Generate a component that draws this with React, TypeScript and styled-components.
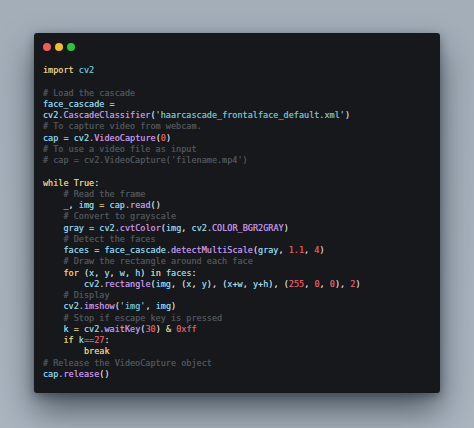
import React from "react";
import styled, { createGlobalStyle } from "styled-components";

const Global = createGlobalStyle`
  html, body { margin: 0; padding: 0; }
  body { width: 474px; height: 428px; overflow: hidden; }
`;

const Page = styled.div`
  width: 474px;
  height: 428px;
  box-sizing: border-box;
  padding: 33px 0 0 34px;
  background: linear-gradient(180deg, #a3aeb9 0%, #a7b2bd 60%, #aab5c0 100%);
`;

const Window = styled.div`
  width: 406px;
  height: 360px;
  box-sizing: border-box;
  padding: 10px 9px;
  background: #16181b;
  border-radius: 3px;
  box-shadow: 0 18px 34px rgba(22, 30, 38, 0.6), 0 3px 10px rgba(22, 30, 38, 0.4);
  display: flex;
  flex-direction: column;
`;

const Dots = styled.div`
  display: flex;
  gap: 4px;
`;

const Dot = styled.span<{ $c: string }>`
  width: 8px;
  height: 8px;
  border-radius: 50%;
  background: ${(p) => p.$c};
`;

const Code = styled.pre`
  margin: 14px 0 0 0;
  font-family: "DejaVu Sans Mono", "Liberation Mono", monospace;
  font-size: 8.5px;
  line-height: 11.25px;
  color: #c3c7cb;
  white-space: pre;
  text-shadow: 0 0 0.4px currentColor;
`;

const Line = styled.div`
  height: 11.25px;
`;

const colors: Record<string, string> = {
  kw: "#e2c880",
  id: "#88cbe3",
  mod: "#62bacf",
  fn: "#bf8fe0",
  str: "#70b8c9",
  num: "#d9575f",
  com: "#4d5258",
  op: "#d2c87e",
  eq: "#d9575f",
  dot: "#a0a6ac",
  p: "#c8ccd0",
  sp: "inherit",
};

const Tok = styled.span<{ $k: string }>`
  color: ${(p) => colors[p.$k]};
`;

const source = `import cv2

# Load the cascade
face_cascade =
cv2.CascadeClassifier('haarcascade_frontalface_default.xml')
# To capture video from webcam.
cap = cv2.VideoCapture(0)
# To use a video file as input
# cap = cv2.VideoCapture('filename.mp4')

while True:
    # Read the frame
    _, img = cap.read()
    # Convert to grayscale
    gray = cv2.cvtColor(img, cv2.COLOR_BGR2GRAY)
    # Detect the faces
    faces = face_cascade.detectMultiScale(gray, 1.1, 4)
    # Draw the rectangle around each face
    for (x, y, w, h) in faces:
        cv2.rectangle(img, (x, y), (x+w, y+h), (255, 0, 0), 2)
    # Display
    cv2.imshow('img', img)
    # Stop if escape key is pressed
    k = cv2.waitKey(30) & 0xff
    if k==27:
        break
# Release the VideoCapture object
cap.release()`;

const KW = new Set(["import", "while", "True", "for", "in", "if", "break"]);

function tokenize(line: string): { k: string; t: string }[] {
  const out: { k: string; t: string }[] = [];
  const re = /(#.*$)|('[^']*')|(0x[0-9a-f]+|\d+(?:\.\d+)?)|([A-Za-z_][A-Za-z0-9_]*)|(==)|(=|&)|(\.)|(\s+)|(.)/g;
  let m: RegExpExecArray | null;
  let prevDot = false;
  let afterImport = false;
  while ((m = re.exec(line))) {
    if (m[1]) out.push({ k: "com", t: m[1] });
    else if (m[2]) out.push({ k: "str", t: m[2] });
    else if (m[3]) out.push({ k: "num", t: m[3] });
    else if (m[4]) {
      const w = m[4];
      let k = "id";
      if (KW.has(w)) k = "kw";
      else if (afterImport) k = "mod";
      else if (prevDot) k = "fn";
      out.push({ k, t: w });
      afterImport = w === "import";
    } else if (m[5]) out.push({ k: "eq", t: m[5] });
    else if (m[6]) out.push({ k: "op", t: m[6] });
    else if (m[7]) out.push({ k: "dot", t: m[7] });
    else if (m[8]) out.push({ k: "sp", t: m[8] });
    else out.push({ k: "p", t: m[9] });
    if (!m[8]) prevDot = !!m[7];
  }
  return out;
}

export default function App() {
  const lines = source.split("\n");
  return (
    <>
      <Global />
      <Page>
        <Window>
          <Dots>
            <Dot $c="#ee5e57" />
            <Dot $c="#f4bd2e" />
            <Dot $c="#2ac43f" />
          </Dots>
          <Code>
            {lines.map((l, i) => (
              <Line key={i}>
                {tokenize(l).map((t, j) => (
                  <Tok key={j} $k={t.k}>
                    {t.t}
                  </Tok>
                ))}
              </Line>
            ))}
          </Code>
        </Window>
      </Page>
    </>
  );
}
